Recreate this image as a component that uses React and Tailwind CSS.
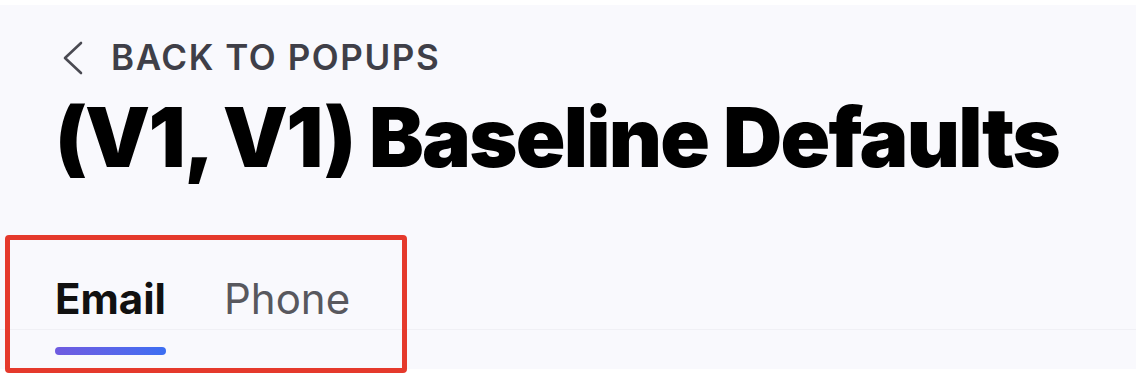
export default function App() {
  return (
    <div className="relative h-[378px] w-full bg-white pt-[5px] font-['Inter',sans-serif] overflow-hidden">
      <div className="h-[364px] bg-[#f9f9fd]">
        <div className="px-[55px] pt-[35px]">
          <a href="#" className="flex items-center gap-[27px] text-[#3f3f48]">
            <svg width="22" height="34" viewBox="0 0 22 34" fill="none" className="shrink-0 ml-[7px]">
              <polyline points="19,2 3,17 19,32" stroke="#4a4a52" strokeWidth="2.6" strokeLinecap="round" strokeLinejoin="round" />
            </svg>
            <span className="text-[35px] leading-none font-semibold tracking-[0.045em]">BACK TO POPUPS</span>
          </a>
          <h1 className="mt-[22px] text-[82px] leading-none font-black tracking-[-0.021em] text-black">
            (V1, V1) Baseline Defaults
          </h1>
        </div>

        <div className="mt-[99px]">
          <div className="flex gap-[58px] border-b border-[#f0f0f5] px-[55px] pb-[9px]">
            <button className="text-[42px] leading-none font-bold text-[#111]">Email</button>
            <button className="text-[42px] leading-none font-normal text-[#58585e]">Phone</button>
          </div>
          <div className="px-[55px]">
            <div className="mt-[17px] h-[8px] w-[111px] rounded-full bg-gradient-to-r from-[#6f5be0] to-[#3b6ef2]" />
          </div>
        </div>
      </div>

      <div className="pointer-events-none absolute left-[5px] top-[235px] h-[138px] w-[402px] rounded-[4px] border-[5px] border-[#e5392c]" />
    </div>
  );
}
